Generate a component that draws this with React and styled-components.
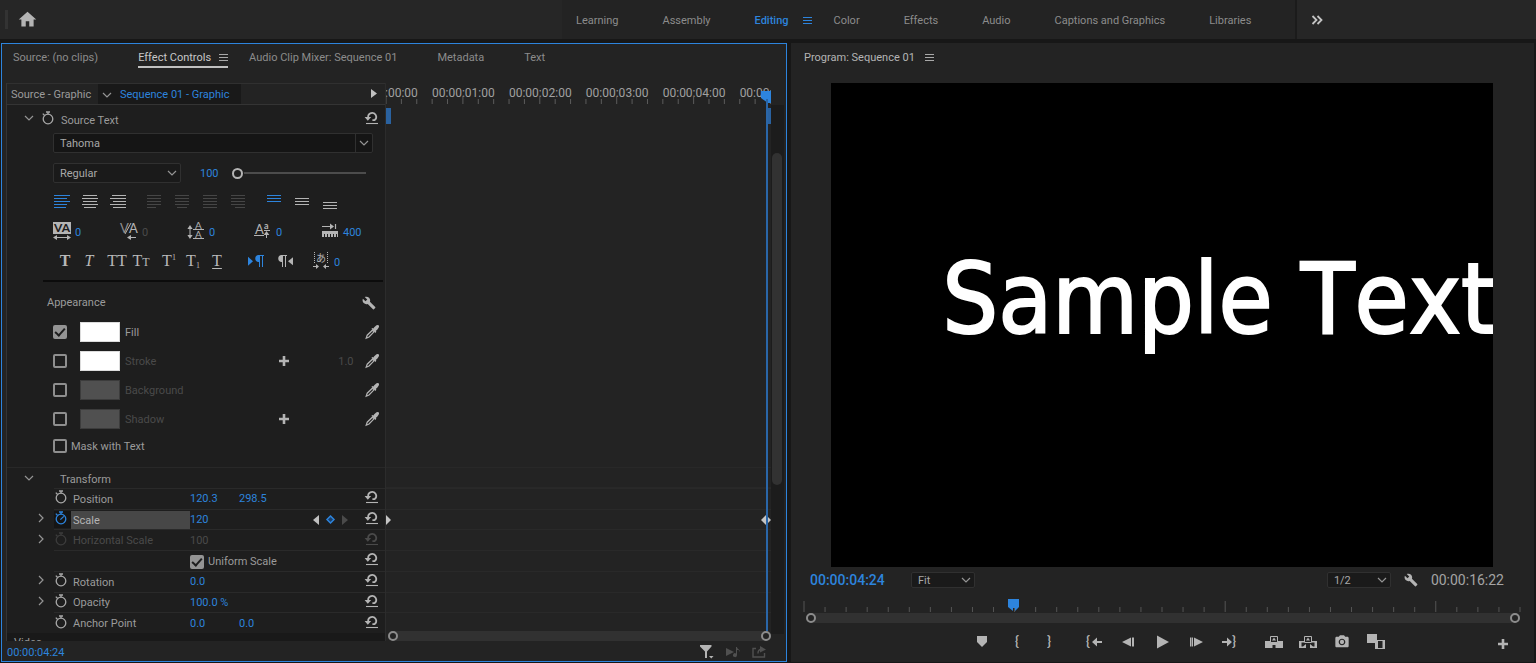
import React, { useState } from 'react';
import styled, { createGlobalStyle } from 'styled-components';
import { MdBuild, MdHome, MdPhotoCamera } from 'react-icons/md';

const BLUE = '#2d84dd';
const TEXT = '#9b9b9b';
const ICON = '#b4b4b4';
const DIM = '#4a4a4a';

/* ---------- icons ---------- */

const ChevronIcon = ({ right }) => (
  <svg width="10" height="10" viewBox="0 0 10 10" fill="none" stroke="#949494" strokeWidth="1.2">
    <path d={right ? 'M3 1l4 4-4 4' : 'M1 3l4 4 4-4'} />
  </svg>
)

const MenuIcon = ({ color = '#a8a8a8' }) => (
  <svg width="9" height="9" viewBox="0 0 9 9" stroke={color}>
    <path d="M0 1.5h9M0 4.5h9M0 7.5h9" />
  </svg>
)

const StopwatchIcon = ({ color = '#a8a8a8', active }) => (
  <svg width="14" height="14" viewBox="0 0 14 14" fill="none" stroke={color} strokeWidth="1.3">
    <circle cx="7" cy="8" r="4.8" />
    <path d="M5 1h4M7 1v2.4M1.8 2.6l1.6 1.6" />
    {active && <path d="M6.4 8.6L9.8 5.4" />}
  </svg>
)

const ResetIcon = ({ color = ICON }) => (
  <svg width="16" height="14" viewBox="0 0 16 14" fill="none" stroke={color}>
    <path d="M5.2 6.4A4 4 0 1 1 11.4 9.2H9.4" strokeWidth="1.8" />
    <path d="M1.6 6h6.6L4.8 9.8z" fill={color} stroke="none" />
    <path d="M3 12.5h12" strokeWidth="1.1" />
  </svg>
)

const DropperIcon = () => (
  <svg width="16" height="16" viewBox="0 0 16 16">
    <path d="M8.4 6.2l1.6 1.6-5 5.2-2.8 1.2 1-3z" fill="none" stroke={ICON} strokeWidth="1.2" />
    <path d="M7.4 4.8l1.1-.8.8.4c1.4-1.9 3.6-4.2 5.2-3.2 1.6 1.2-.4 3.8-2.6 5.6l.4.9-.9 1.2z" fill={ICON} />
  </svg>
)

const PlusIcon = () => (
  <svg width="12" height="12" viewBox="0 0 12 12" stroke={ICON} strokeWidth="2.6">
    <path d="M6 1v10M1 6h10" />
  </svg>
)

const lineSets = {
  left: [[0, 16], [0, 13], [0, 16], [0, 13], [0, 12]],
  center: [[1, 14], [0, 16], [1, 14], [0, 16], [2, 12]],
  right: [[2, 14], [0, 16], [3, 13], [0, 16], [3, 13]],
  justLeft: [[1, 14], [1, 14], [1, 14], [1, 14], [1, 9]],
  justCenter: [[1, 14], [1, 14], [1, 14], [1, 14], [3, 10]],
  justAll: [[1, 14], [1, 14], [1, 14], [1, 14], [1, 14]],
  justRight: [[1, 14], [1, 14], [1, 14], [1, 14], [5, 10]],
}

const AlignIcon = ({ type, color }) => (
  <svg width="16" height="14" viewBox="0 0 16 14" fill={color}>
    {lineSets[type].map(([x, w], i) => <rect key={i} x={x} y={i * 3} width={w} height="1" />)}
  </svg>
)

const VAlignIcon = ({ top, color }) => (
  <svg width="14" height="16" viewBox="0 0 14 16" fill={color}>
    {[0, 3, 6].map((y) => <rect key={y} x="0" y={y + top} width="14" height="1" />)}
  </svg>
)

const GlyphText = styled.text`
  font-family: Lato, 'Liberation Sans', sans-serif;
  font-size: ${(p) => p.$size || 12}px;
  font-weight: ${(p) => (p.$bold ? 700 : 400)};
`

const TrackingIcon = () => (
  <svg width="18" height="18" viewBox="0 0 18 18">
    <rect width="18" height="12" fill={ICON} />
    <GlyphText x="9" y="10" textAnchor="middle" fill="#1b1b1b" $bold>VA</GlyphText>
    <path d="M2 15.5h14" stroke={ICON} />
    <path d="M0 15.5l4-2.5v5zM18 15.5l-4-2.5v5z" fill={ICON} />
  </svg>
)

const KerningIcon = () => (
  <svg width="18" height="18" viewBox="0 0 18 18">
    <GlyphText x="0" y="11" fill="#8f8f8f" $size={13}>V</GlyphText>
    <GlyphText x="9" y="11" fill={ICON} $size={13}>A</GlyphText>
    <path d="M11 1L5 12M10 15.5h6" stroke={ICON} />
    <path d="M7 15.5l4-2.5v5z" fill={ICON} />
  </svg>
)

const LeadingIcon = () => (
  <svg width="18" height="18" viewBox="0 0 18 18">
    <GlyphText x="8" y="7" fill={ICON} $size={10}>A</GlyphText>
    <GlyphText x="8" y="16" fill={ICON} $size={10}>A</GlyphText>
    <path d="M6 7.5h11M6 16.5h11M3 5v9" stroke={ICON} />
    <path d="M3 3l2.6 4H.4zM3 17l2.6-4H.4z" fill={ICON} />
  </svg>
)

const BaselineIcon = () => (
  <svg width="18" height="18" viewBox="0 0 18 18">
    <GlyphText x="1" y="12" fill={ICON} $size={13}>A</GlyphText>
    <GlyphText x="10" y="7" fill={ICON} $size={9} $bold>a</GlyphText>
    <path d="M0 13.5h10M10 8.5h6M12.5 10v6" stroke={ICON} />
    <path d="M12.5 9l2.8 4h-5.6z" fill={ICON} />
  </svg>
)

const TabWidthIcon = () => (
  <svg width="18" height="18" viewBox="0 0 18 18">
    <path d="M1 4.5h9M14.5 2v5" stroke={ICON} strokeWidth="1.2" />
    <path d="M13 4.5L9 1.5v6zM1 9h16v6h-1v-3h-1v3h-2v-3h-1v3h-2v-3H9v3H7v-3H6v3H4v-3H3v3H1z" fill={ICON} />
  </svg>
)

const CjkText = styled.text`
  font-family: 'Noto Sans', 'Noto Sans CJK JP', sans-serif;
  font-size: 10px;
`

const TsumeIcon = () => (
  <svg width="18" height="18" viewBox="0 0 18 18">
    <CjkText x="9" y="10" textAnchor="middle" fill={ICON}>あ</CjkText>
    <path d="M2.5 0v11M15.5 0v11" stroke={ICON} strokeDasharray="1 1" />
    <path d="M1 14.5h4M13 14.5h4" stroke={ICON} />
    <path d="M7 14.5l-3-2.5v5zM11 14.5l3-2.5v5z" fill={ICON} />
  </svg>
)

const PilcrowIcon = ({ rtl }) => (
  <svg width="18" height="14" viewBox="0 0 18 14">
    {rtl
      ? <path d="M8 1H6a3.600 3.600 0 0 0 0 7h1v5h1V2h2v11h1V2h1V1zM18 3.200v8L13 7.200z" fill={ICON} />
      : <path d="M13 1h-2a3.600 3.600 0 0 0 0 7h1v5h1V2h2v11h1V2h1V1zM1 2.800v9l5-4.500z" fill={BLUE} />}
  </svg>
)

const FunnelIcon = () => (
  <svg width="14" height="14" viewBox="0 0 14 14" fill={ICON}>
    <path d="M0 0h11.5v1.5L7 6.5V13H5V6.5L0 1.5zM9 11h4.5L11.3 13.5z" />
  </svg>
)

const AudioLoopIcon = () => (
  <svg width="14" height="12" viewBox="0 0 14 12" fill="#505050">
    <path d="M0 2l8 4-8 4zM10 1h1c0 2 3 2 3 5l-1.400-2H11v5a2 2 0 1 1-1-1.600z" />
  </svg>
)

const ExportIcon = () => (
  <svg width="14" height="12" viewBox="0 0 14 12" fill="none" stroke="#505050" strokeWidth="1.4">
    <path d="M4 2.5H1v8.5h11.5V7" />
    <path d="M6 7.5C6 4.5 7 3.5 9 3.5" />
    <path d="M8 0l6 3.5L8 6.5z" fill="#505050" stroke="none" />
  </svg>
)

const arrowLeft = 'M0 5l5-4.5V4h5v2H5v3.5z'
const arrowRight = 'M10 5L5 .5V4H0v2h5v3.5z'

const transportIcons = {
  marker: <path d="M5 4h10v6l-5 5-5-5z" />,
  markIn: <GlyphText x="11" y="14" textAnchor="middle" $size={13} $bold>{'{'}</GlyphText>,
  markOut: <GlyphText x="9" y="14" textAnchor="middle" $size={13} $bold>{'}'}</GlyphText>,
  goIn: (
    <>
      <GlyphText x="2" y="14" $size={13} $bold>{'{'}</GlyphText>
      <path d={arrowLeft} transform="translate(8 5)" />
    </>
  ),
  back: <path d="M4 10l9-4.5v9zM14 5.5h2v9h-2z" />,
  play: <path d="M5 3.5l12 6.5-12 6.5z" />,
  forward: <path d="M17 10L8 5.5v9zM4 5.5h1.5v9H4zM6 5.5h1v9H6z" />,
  goOut: (
    <>
      <path d={arrowRight} transform="translate(2 5)" />
      <GlyphText x="12" y="14" $size={13} $bold>{'}'}</GlyphText>
    </>
  ),
  lift: (
    <>
      <path d="M1 9h18v7h-7.5v-3h-3v3H1z" />
      <path d="M6.5 4.5h7v6h-7z" fill="#232323" stroke={ICON} />
      <path d="M10 5.5l2 3H8z" />
    </>
  ),
  extract: (
    <>
      <path d="M1 9h5v1.5H3.500v4H5L8 12v4H1zM19 9h-5v1.5h2.500v4H15L12 12v4h7z" />
      <path d="M6.5 4.5h7v6h-7z" fill="#232323" stroke={ICON} />
      <path d="M10 5.5l2 3H8z" />
    </>
  ),
  compare: (
    <>
      <path d="M1 2h10v9H1z" />
      <path d="M9.5 8.5h9v8h-9z" fill="#232323" stroke={ICON} />
      <path d="M9 8h3v9H9zM16.5 8H19v9h-2.5z" />
    </>
  ),
}

const TransportIcon = ({ name }) => (
  <svg width="20" height="20" viewBox="0 0 20 20" fill={ICON}>{transportIcons[name]}</svg>
)

/* ---------- shared parts ---------- */

const GlobalStyle = createGlobalStyle`
  * {
    box-sizing: border-box;
  }
  body {
    margin: 0;
    background: #171717;
    color: ${TEXT};
    font-family: Roboto, 'Liberation Sans', sans-serif;
    font-size: 11px;
    line-height: 14px;
  }
  button, select, input {
    font: inherit;
    color: inherit;
    margin: 0;
  }
  svg {
    display: block;
    flex: none;
    overflow: visible;
  }
`

const Window = styled.div`
  display: flex;
  flex-direction: column;
  min-height: 100vh;
`

const IconButton = styled.button`
  display: flex;
  align-items: center;
  justify-content: center;
  width: ${(p) => p.$width || 16}px;
  height: ${(p) => p.$height || 16}px;
  flex: none;
  padding: 0;
  border: 0;
  background: none;
  color: ${ICON};
`

const ResetButton = styled(IconButton)`
  margin-bottom: 3px;
`

const Hot = styled.span`
  padding-top: 1px;
  color: ${(p) => (p.$dim ? DIM : BLUE)};
  width: ${(p) => (p.$width ? `${p.$width}px` : 'auto')};
  white-space: nowrap;
`

const Check = styled.input.attrs({ type: 'checkbox' })`
  appearance: none;
  display: grid;
  place-content: center;
  width: 14px;
  height: 14px;
  flex: none;
  border: 2px solid #8e8e8e;
  border-radius: 2px;
  &:checked {
    background: #949494;
    border-color: #949494;
  }
  &:checked::before {
    content: '';
    width: 4px;
    height: 8px;
    margin-bottom: 2px;
    border: solid #1e1e1e;
    border-width: 0 2px 2px 0;
    transform: rotate(42deg);
  }
`

const SelectBox = styled.div`
  position: relative;
  display: flex;
  height: ${(p) => p.$height}px;
  width: ${(p) => (p.$width ? `${p.$width}px` : 'auto')};
  border: 1px solid #303030;
  border-radius: 2px;
  background: ${(p) => p.$bg || '#1a1a1a'};
  color: #a8a8a8;
  select {
    flex: 1;
    appearance: none;
    border: 0;
    padding: 1px 6px 0;
    background: none;
  }
  option {
    background: #1a1a1a;
  }
`

const SelectArrow = styled.span`
  position: absolute;
  right: 0;
  top: 0;
  bottom: 0;
  display: flex;
  align-items: center;
  padding: 0 3px;
  border-left: 1px solid ${(p) => (p.$split ? '#303030' : 'transparent')};
  pointer-events: none;
`

function Dropdown({ label, value, split, ...box }) {
  return (
    <SelectBox {...box}>
      <select aria-label={label} defaultValue={value}>
        <option>{value}</option>
      </select>
      <SelectArrow $split={split}><ChevronIcon /></SelectArrow>
    </SelectBox>
  )
}

const Ring = styled.span`
  width: 10px;
  height: 10px;
  border: 2px solid #8c8c8c;
  border-radius: 50%;
  background: #232323;
`

const ZoomBar = styled.div`
  display: flex;
  justify-content: space-between;
  height: 10px;
  margin: ${(p) => p.$margin || 0};
  border-radius: 5px;
  background: #313131;
`

/* ---------- top bar ---------- */

const TopBar = styled.header`
  display: grid;
  grid-template-columns: 562fr 735fr 239fr;
  height: 39px;
  margin-bottom: 4px;
  background: #262626;
`

const HomeArea = styled.div`
  display: flex;
  align-items: center;
  padding-left: 5px;
  gap: 8px;
`

const Grip = styled.span`
  width: 3px;
  height: 19px;
  background: #333;
`

const Workspaces = styled.nav`
  display: flex;
  align-items: center;
  gap: 44px;
  padding: 2px 0 0 14px;
  background: #232323;
  border-right: 2px solid #1b1b1b;
`

const WorkspaceTab = styled.button`
  display: flex;
  align-items: center;
  gap: 14px;
  padding: 0;
  border: 0;
  background: none;
  white-space: nowrap;
  color: ${(p) => (p.$active ? BLUE : '#8c8c8c')};
  font-weight: ${(p) => (p.$active ? 500 : 400)};
  margin-right: ${(p) => (p.$active ? '-22px' : 0)};
`

const More = styled.div`
  display: flex;
  align-items: center;
  padding-left: 12px;
`

const workspaces = ['Learning', 'Assembly', 'Editing', 'Color', 'Effects', 'Audio', 'Captions and Graphics', 'Libraries']

function WorkspaceBar() {
  const [active, setActive] = useState('Editing')
  return (
    <TopBar>
      <HomeArea>
        <Grip />
        <IconButton $width={22} $height={22} aria-label="Home"><MdHome size={21} /></IconButton>
      </HomeArea>
      <Workspaces>
        {workspaces.map((w) => (
          <WorkspaceTab key={w} $active={w === active} onClick={() => setActive(w)}>
            {w}
            {w === active && <MenuIcon color={BLUE} />}
          </WorkspaceTab>
        ))}
      </Workspaces>
      <More>
        <IconButton aria-label="More workspaces">
          <svg width="12" height="10" viewBox="0 0 12 10" fill="none" stroke="#c4c4c4" strokeWidth="1.8">
            <path d="M1.5 1l4 4-4 4M6.5 1l4 4-4 4" />
          </svg>
        </IconButton>
      </More>
    </TopBar>
  )
}

/* ---------- effect controls ---------- */

const Main = styled.main`
  flex: 1;
  display: grid;
  grid-template-columns: 786fr 743fr;
  gap: 4px;
  padding: 0 2px 1px 1px;
`

const Panel = styled.section`
  display: flex;
  flex-direction: column;
  min-width: 0;
  background: #232323;
  border: 1px solid ${(p) => (p.$focus ? BLUE : '#232323')};
`

const PanelTabs = styled.div`
  display: flex;
  align-items: flex-start;
  gap: 40px;
  height: 39px;
  padding: 3px 0 0 11px;
`

const PanelTab = styled.button`
  display: flex;
  align-items: center;
  gap: 8px;
  height: 21px;
  padding: 2px 0 0;
  border: 0;
  border-bottom: 2px solid ${(p) => (p.$active ? '#c0c0c0' : 'transparent')};
  margin-right: ${(p) => (p.$active ? '-19px' : 0)};
  background: none;
  white-space: nowrap;
  color: ${(p) => (p.$active ? '#c8c8c8' : '#8c8c8c')};
`

const EffectBody = styled.div`
  flex: 1;
  display: grid;
  grid-template-columns: 380fr 384fr 15px;
  margin-left: 4px;
`

const EffectList = styled.div`
  display: flex;
  flex-direction: column;
  min-width: 0;
  border-left: 1px solid #343434;
  border-right: 1px solid #2c2c2c;
  background: #1e1e1e;
`

const ClipHeader = styled.div`
  display: flex;
  align-items: center;
  height: 22px;
  border-top: 1px solid #303030;
  border-bottom: 1px solid #343434;
  background: #232323;
  padding-left: 4px;
`

const ClipSource = styled.span`
  width: 87px;
  padding-top: 2px;
  white-space: nowrap;
`

const ClipSequence = styled.button`
  display: flex;
  align-items: center;
  gap: 8px;
  height: 20px;
  padding: 2px 12px 0 4px;
  border: 0;
  background: #191919;
  color: ${BLUE};
  white-space: nowrap;
`

const PushRight = styled.span`
  margin-left: auto;
  padding-right: ${(p) => p.$pad || 0}px;
`

const GroupRow = styled.div`
  display: flex;
  align-items: center;
  gap: ${(p) => p.$gap || 7}px;
  height: ${(p) => p.$height}px;
  padding: 0 6px 0 17px;
  flex: none;
`

const StopwatchSlot = styled.span`
  width: 16px;
  margin-left: 3px;
`

const GroupLabel = styled.span`
  padding-top: ${(p) => p.$drop || 0}px;
  margin-left: ${(p) => p.$indent || 0}px;
`

const TextSection = styled.div`
  display: flex;
  flex-direction: column;
  height: 363px;
  border-bottom: 1px solid #282828;
`

const FontControls = styled.div`
  display: flex;
  flex-direction: column;
  gap: 10px;
  padding: 3px 12px 9px 46px;
`

const StyleRow = styled.div`
  display: flex;
  align-items: center;
  height: 20px;
`

const Slider = styled.input.attrs({ type: 'range' })`
  appearance: none;
  flex: 1;
  min-width: 0;
  height: 12px;
  margin: 0 7px 0 13px;
  background: linear-gradient(#4c4c4c, #4c4c4c) center / 100% 2px no-repeat;
  &::-webkit-slider-thumb {
    appearance: none;
    width: 11px;
    height: 11px;
    border: 2px solid #b4b4b4;
    border-radius: 50%;
    background: #1e1e1e;
    box-shadow: 0 0 0 1px #1e1e1e;
  }
`

const OpacityValue = styled(Hot)`
  margin-left: 19px;
`

const AlignRow = styled.div`
  display: flex;
  gap: 8px;
  height: 20px;
  margin: -1px 0 -1px -5px;
`

const ButtonGroup = styled.div`
  display: flex;
  align-items: center;
`

const MetricRow = styled.div`
  display: grid;
  grid-template-columns: repeat(5, 67px);
  height: 20px;
`

const Metric = styled.div`
  display: flex;
  align-items: center;
  gap: 4px;
  ${Hot} {
    padding-top: 3px;
  }
`

const TypeRow = styled.div`
  display: flex;
  gap: 4px;
  height: 20px;
`

const TypeButton = styled.button`
  width: 24px;
  padding: 0;
  border: 0;
  background: none;
  color: #b8b8b8;
  font: ${(p) => p.$font || '400 16px'}/20px 'Liberation Serif', serif;
  text-decoration: ${(p) => (p.$underline ? 'underline' : 'none')};
  text-underline-offset: 2px;
  small {
    font-size: ${(p) => p.$small || 8}px;
    vertical-align: ${(p) => p.$shift || 'baseline'};
    line-height: 8px;
  }
`

const Paragraphs = styled(ButtonGroup)`
  margin-left: 9px;
`

const TsumeMetric = styled(Metric)`
  margin-left: 10px;
`

const Divider = styled.hr`
  width: auto;
  height: 2px;
  margin: 0 2px 0 36px;
  border: 0;
  background: #0c0c0c;
`

const Appearance = styled.div`
  display: flex;
  flex-direction: column;
  padding: 11px 5px 0 46px;
`

const AppearanceTitle = styled.div`
  display: flex;
  align-items: center;
  justify-content: space-between;
  height: 20px;
  margin: 0 3px 4px -6px;
`

const AppearanceRow = styled.div`
  display: flex;
  align-items: center;
  height: 29px;
`

const MaskRow = styled(AppearanceRow)`
  height: 26px;
`

const Swatch = styled.button`
  width: 40px;
  height: 20px;
  margin-left: 13px;
  padding: 0;
  border: 1px solid ${(p) => (p.$empty ? '#3c3c3c' : '#dcdcdc')};
  background: ${(p) => (p.$empty ? '#505050' : '#fff')};
`

const AppearanceLabel = styled.label`
  flex: 1;
  margin-left: ${(p) => p.$gap || 5}px;
  padding-top: 2px;
  color: ${(p) => (p.$dim ? DIM : TEXT)};
`

const StrokeWidth = styled.span`
  width: 62px;
  margin-right: 11px;
  padding-top: 3px;
  text-align: right;
  color: ${DIM};
`

const PropertyGrid = styled.div`
  flex: 1;
  display: grid;
  grid-template-rows: repeat(7, 1fr);
`

const PropertyRow = styled.div`
  display: flex;
  align-items: center;
  padding-left: 29px;
`

const Twirl = styled.span`
  width: 18px;
  padding-bottom: 2px;
`

const PropertyBody = styled.div`
  flex: 1;
  display: flex;
  align-items: center;
  height: 100%;
  padding-right: 6px;
  border-top: 1px solid #2a2a2a;
`

const Watch = styled.span`
  width: 17px;
  height: 17px;
  background: ${(p) => (p.$active ? '#151515' : 'none')};
`

const PropertyName = styled.span`
  width: 119px;
  padding: 3px 0 1px 2px;
  white-space: nowrap;
  color: ${(p) => (p.$dim ? DIM : p.$selected ? '#b4b4b4' : TEXT)};
  background: ${(p) => (p.$selected ? '#474747' : 'none')};
`

const UniformLabel = styled.label`
  display: flex;
  align-items: center;
  gap: 4px;
  padding-top: 2px;
`

const KeyNav = styled.span`
  display: flex;
  margin-right: 10px;
`

const NextEffect = styled.div`
  height: 8px;
  padding: 3px 0 0 7px;
  overflow: hidden;
  background: #191919;
`

const Lanes = styled.div`
  position: relative;
  display: flex;
  flex-direction: column;
  min-width: 0;
  overflow: hidden;
`

const Ruler = styled.div`
  position: relative;
  height: 22px;
  flex: none;
`

const RulerLabels = styled.div`
  display: grid;
  grid-template-columns: repeat(6, 1fr);
  margin: 0 -10%;
  font-size: 12px;
  line-height: 20px;
  text-align: center;
  color: #a0a0a0;
`

const Ticks = styled.svg`
  position: absolute;
  left: 0;
  bottom: 0;
  width: 100%;
  height: 100%;
`

const LaneSpace = styled.div`
  height: ${(p) => p.$height}px;
  flex: none;
  display: flex;
  justify-content: space-between;
  padding: 3px 0;
  border-bottom: 1px solid #282828;
`

const ClipEdge = styled.span`
  width: 5px;
  height: 16px;
  background: #2a62a0;
`

const Lane = styled.div`
  display: flex;
  align-items: center;
  justify-content: space-between;
  border-top: 1px solid #292929;
`

const TimelinePlayhead = styled.svg`
  position: absolute;
  right: 0;
  top: 8px;
  width: 10px;
  height: calc(100% - 18px);
  overflow: hidden;
`

const ScrollTrack = styled.div`
  margin: 22px 2px 7px 0;
  padding: 48px 2px 0 1px;
  background: #1c1c1c;
`

const ScrollThumb = styled.div`
  height: 69%;
  border-radius: 5px;
  background: #323232;
`

const EffectFooter = styled.footer`
  display: flex;
  align-items: center;
  gap: 10px;
  height: 20px;
  padding: 2px 19px 0 5px;
  ${Hot} {
    flex: 1;
    padding-top: 2px;
  }
`

const horizontal = ['left', 'center', 'right']
const justified = ['justLeft', 'justCenter', 'justAll', 'justRight']

const fills = [
  { name: 'Fill', checked: true },
  { name: 'Stroke', dim: true, add: true, width: '1.0' },
  { name: 'Background', dim: true, empty: true },
  { name: 'Shadow', dim: true, empty: true, add: true },
]

const properties = [
  { name: 'Position', values: ['120.3', '298.5'] },
  { name: 'Scale', values: ['120'], twirl: true, keyed: true },
  { name: 'Horizontal Scale', values: ['100'], twirl: true, dim: true },
  { uniform: true, name: 'uniform' },
  { name: 'Rotation', values: ['0.0'], twirl: true },
  { name: 'Opacity', values: ['100.0 %'], twirl: true },
  { name: 'Anchor Point', values: ['0.0', '0.0'] },
]

function SourceText() {
  return (
    <FontControls>
      <Dropdown label="Font" value="Tahoma" split $height={20} $bg="#151515" />
      <StyleRow>
        <Dropdown label="Font style" value="Regular" $height={20} $width={128} />
        <OpacityValue>100</OpacityValue>
        <Slider aria-label="Font size" min="0" max="400" defaultValue="0" />
      </StyleRow>
      <AlignRow>
        <ButtonGroup>
          {horizontal.map((t, i) => (
            <IconButton key={t} $width={28} aria-label={`Align ${t}`}>
              <AlignIcon type={t} color={i === 0 ? BLUE : ICON} />
            </IconButton>
          ))}
        </ButtonGroup>
        <ButtonGroup>
          {justified.map((t) => (
            <IconButton key={t} $width={28} aria-label={t} disabled><AlignIcon type={t} color="#464646" /></IconButton>
          ))}
        </ButtonGroup>
        <ButtonGroup>
          <IconButton $width={28} aria-label="Top"><VAlignIcon top={1} color={BLUE} /></IconButton>
          <IconButton $width={28} aria-label="Middle"><VAlignIcon top={4} color={ICON} /></IconButton>
          <IconButton $width={28} aria-label="Bottom"><VAlignIcon top={8} color={ICON} /></IconButton>
        </ButtonGroup>
      </AlignRow>
      <MetricRow>
        <Metric><TrackingIcon /><Hot>0</Hot></Metric>
        <Metric><KerningIcon /><Hot $dim>0</Hot></Metric>
        <Metric><LeadingIcon /><Hot>0</Hot></Metric>
        <Metric><BaselineIcon /><Hot>0</Hot></Metric>
        <Metric><TabWidthIcon /><Hot>400</Hot></Metric>
      </MetricRow>
      <TypeRow>
        <ButtonGroup>
          <TypeButton $font="700 16px">T</TypeButton>
          <TypeButton $font="italic 400 16px">T</TypeButton>
        </ButtonGroup>
        <ButtonGroup>
          <TypeButton>TT</TypeButton>
          <TypeButton $small={12}>T<small>T</small></TypeButton>
        </ButtonGroup>
        <ButtonGroup>
          <TypeButton $shift="6px">T<small>1</small></TypeButton>
          <TypeButton $shift="-2px">T<small>1</small></TypeButton>
          <TypeButton $underline>T</TypeButton>
        </ButtonGroup>
        <Paragraphs>
          <IconButton $width={28} aria-label="Left to right"><PilcrowIcon /></IconButton>
          <IconButton $width={28} aria-label="Right to left"><PilcrowIcon rtl /></IconButton>
        </Paragraphs>
        <TsumeMetric><TsumeIcon /><Hot>0</Hot></TsumeMetric>
      </TypeRow>
    </FontControls>
  )
}

function Property({ name, values, twirl, keyed, dim, uniform }) {
  const resetColor = dim ? DIM : ICON
  return (
    <PropertyRow>
      <Twirl>{twirl && <ChevronIcon right />}</Twirl>
      <PropertyBody>
        <Watch $active={keyed}>
          {!uniform && <StopwatchIcon color={dim ? '#3c3c3c' : keyed ? BLUE : undefined} active={keyed} />}
        </Watch>
        <PropertyName $dim={dim} $selected={keyed}>{!uniform && name}</PropertyName>
        {uniform
          ? <UniformLabel><Check defaultChecked />Uniform Scale</UniformLabel>
          : values.map((v, i) => <Hot key={i} $dim={dim} $width={49}>{v}</Hot>)}
        <PushRight />
        {keyed && (
          <KeyNav>
            <IconButton $width={15} aria-label="Previous keyframe">
              <svg width="7" height="10" fill="#c0c0c0"><path d="M7 0v10L1 5z" /></svg>
            </IconButton>
            <IconButton $width={15} aria-label="Toggle keyframe">
              <svg width="9" height="9" fill="#1c3f68" stroke={BLUE} strokeWidth="1.5"><path d="M4.5 1L8 4.5 4.5 8 1 4.5z" /></svg>
            </IconButton>
            <IconButton $width={15} aria-label="Next keyframe">
              <svg width="7" height="10" fill="#4a4a4a"><path d="M0 0v10l6-5z" /></svg>
            </IconButton>
          </KeyNav>
        )}
        <ResetButton aria-label="Reset"><ResetIcon color={resetColor} /></ResetButton>
      </PropertyBody>
    </PropertyRow>
  )
}

function EffectTimeline() {
  const ticks = Array.from({ length: 26 }, (_, i) => i)
  return (
    <Lanes>
      <Ruler>
        <RulerLabels>
          {[0, 1, 2, 3, 4, 5].map((s) => <span key={s}>00:00:0{s}:00</span>)}
        </RulerLabels>
        <Ticks stroke="#5c5c5c">
          {ticks.map((i) => (
            <line key={i} x1={`${i * 4}%`} x2={`${i * 4}%`} y1={i % 5 === 0 ? 13 : 16} y2="21" />
          ))}
        </Ticks>
      </Ruler>
      <LaneSpace $height={363}><ClipEdge /><ClipEdge /></LaneSpace>
      <LaneSpace $height={20} />
      <PropertyGrid>
        {properties.map((p) => (
          <Lane key={p.name}>
            {p.keyed && (
              <>
                <svg width="5" height="10" fill="#c4c4c4"><path d="M0 0v10l5-5z" /></svg>
                <svg width="10" height="10" fill="#c4c4c4"><path d="M5 0L0 5l5 5 5-5z" /></svg>
              </>
            )}
          </Lane>
        ))}
      </PropertyGrid>
      <TimelinePlayhead>
        <path d="M0 0h10v12H7L0 7z" fill={BLUE} />
        <rect x="5" y="8" width="2" height="100%" fill="#2a66a8" />
      </TimelinePlayhead>
      <ZoomBar $margin="-2px 0 0 2px"><Ring /><Ring /></ZoomBar>
    </Lanes>
  )
}

function EffectControls() {
  return (
    <Panel $focus>
      <PanelTabs>
        <PanelTab>Source: (no clips)</PanelTab>
        <PanelTab $active>Effect Controls <MenuIcon /></PanelTab>
        <PanelTab>Audio Clip Mixer: Sequence 01</PanelTab>
        <PanelTab>Metadata</PanelTab>
        <PanelTab>Text</PanelTab>
      </PanelTabs>
      <EffectBody>
        <EffectList>
          <ClipHeader>
            <ClipSource>Source - Graphic</ClipSource>
            <ClipSequence><ChevronIcon />Sequence 01 - Graphic</ClipSequence>
            <PushRight $pad={8}>
              <svg width="6" height="10" fill="#c0c0c0"><path d="M0 0v9l6-4.5z" /></svg>
            </PushRight>
          </ClipHeader>
          <TextSection>
            <GroupRow $height={25} $gap={4}>
              <ChevronIcon />
              <StopwatchSlot><StopwatchIcon /></StopwatchSlot>
              <GroupLabel $drop={6}>Source Text</GroupLabel>
              <PushRight><IconButton aria-label="Reset text"><ResetIcon /></IconButton></PushRight>
            </GroupRow>
            <SourceText />
            <Divider />
            <Appearance>
              <AppearanceTitle>
                Appearance
                <IconButton aria-label="Appearance settings"><MdBuild size={14} /></IconButton>
              </AppearanceTitle>
              {fills.map((f) => (
                <AppearanceRow key={f.name}>
                  <Check id={f.name} defaultChecked={f.checked} />
                  <Swatch $empty={f.empty} aria-label={`${f.name} color`} />
                  <AppearanceLabel htmlFor={f.name} $dim={f.dim}>{f.name}</AppearanceLabel>
                  {f.add && <IconButton $width={14} aria-label={`Add ${f.name}`}><PlusIcon /></IconButton>}
                  <StrokeWidth>{f.width}</StrokeWidth>
                  <IconButton aria-label={`Pick ${f.name}`}><DropperIcon /></IconButton>
                </AppearanceRow>
              ))}
              <MaskRow>
                <Check id="mask" />
                <AppearanceLabel htmlFor="mask" $gap={4}>Mask with Text</AppearanceLabel>
              </MaskRow>
            </Appearance>
          </TextSection>
          <GroupRow $height={20}>
            <ChevronIcon />
            <GroupLabel $indent={19} $drop={4}>Transform</GroupLabel>
          </GroupRow>
          <PropertyGrid>
            {properties.map((p) => <Property key={p.name} {...p} />)}
          </PropertyGrid>
          <NextEffect>Video</NextEffect>
        </EffectList>
        <EffectTimeline />
        <ScrollTrack><ScrollThumb /></ScrollTrack>
      </EffectBody>
      <EffectFooter>
        <Hot>00:00:04:24</Hot>
        <IconButton aria-label="Filter"><FunnelIcon /></IconButton>
        <IconButton aria-label="Play audio" disabled><AudioLoopIcon /></IconButton>
        <IconButton aria-label="Export" disabled><ExportIcon /></IconButton>
      </EffectFooter>
    </Panel>
  )
}

/* ---------- program monitor ---------- */

const ProgramTitle = styled.h2`
  display: flex;
  align-items: center;
  gap: 10px;
  height: 27px;
  margin: 0 0 12px;
  padding-left: 12px;
  font-size: 11px;
  font-weight: 400;
  color: #b4b4b4;
`

const Screen = styled.div`
  flex: 1;
  margin: 0 40px 0 39px;
  padding: 166px 0 0 15%;
  overflow: hidden;
  background: #000;
  color: #fff;
  font: 98px/100px 'DejaVu Sans Condensed', 'DejaVu Sans', sans-serif;
  font-kerning: none;
  -webkit-text-stroke: 2px #fff;
  white-space: nowrap;
`

const MonitorInfo = styled.div`
  display: flex;
  align-items: center;
  height: 25px;
  padding: 0 29px 0 18px;
`

const Timecode = styled.span`
  width: ${(p) => p.$width || 'auto'};
  font-size: 14px;
  font-weight: ${(p) => (p.$current ? 500 : 400)};
  color: ${(p) => (p.$current ? BLUE : '#a4a4a4')};
`

const InfoRight = styled.div`
  display: flex;
  align-items: center;
  gap: 12px;
  margin-left: auto;
`

const MonitorRuler = styled.div`
  position: relative;
  height: 21px;
  margin: 0 13px 0 12px;
`

const MonitorPlayhead = styled.svg`
  position: absolute;
  left: 28%;
  top: 7px;
  margin-left: 4px;
`

const Transport = styled.div`
  display: grid;
  grid-template-columns: 176fr auto 142fr;
  align-items: center;
  height: 38px;
`

const TransportGroups = styled.div`
  grid-column: 2;
  display: flex;
  gap: 10px;
`

const AddButton = styled(IconButton)`
  justify-self: end;
  margin: 4px 22px 0 0;
`

function ProgramMonitor() {
  const ticks = Array.from({ length: 35 }, (_, i) => i)
  const groups = [
    ['marker', 'markIn', 'markOut'],
    ['goIn', 'back', 'play', 'forward', 'goOut'],
    ['lift', 'extract', 'camera', 'compare'],
  ]
  return (
    <Panel>
      <ProgramTitle>Program: Sequence 01 <MenuIcon /></ProgramTitle>
      <Screen>Sample Text</Screen>
      <MonitorInfo>
        <Timecode $current $width="101px">00:00:04:24</Timecode>
        <Dropdown label="Zoom level" value="Fit" $height={16} $width={64} />
        <InfoRight>
          <Dropdown label="Playback resolution" value="1/2" $height={16} $width={64} />
          <IconButton aria-label="Settings"><MdBuild size={14} /></IconButton>
          <Timecode>00:00:16:22</Timecode>
        </InfoRight>
      </MonitorInfo>
      <MonitorRuler>
        <Ticks stroke="#555">
          {ticks.map((i) => (
            <line key={i} x1={`${(i * 100) / 34}%`} x2={`${(i * 100) / 34}%`} y1={i % 10 === 0 ? 9 : 15} y2="20" />
          ))}
        </Ticks>
        <MonitorPlayhead width="12" height="13"><path d="M0 0h11v8l-4 4V9H5v3L0 8z" fill={BLUE} /></MonitorPlayhead>
      </MonitorRuler>
      <ZoomBar $margin="0 13px 0 14px"><Ring /><Ring /></ZoomBar>
      <Transport>
        <TransportGroups>
          {groups.map((g) => (
            <ButtonGroup key={g[0]}>
              {g.map((name) => (
                <IconButton key={name} $width={34} $height={24} aria-label={name}>
                  {name === 'camera' ? <MdPhotoCamera size={16} /> : <TransportIcon name={name} />}
                </IconButton>
              ))}
            </ButtonGroup>
          ))}
        </TransportGroups>
        <AddButton aria-label="Button editor"><PlusIcon /></AddButton>
      </Transport>
    </Panel>
  )
}

function App() {
  return (
    <Window>
      <GlobalStyle />
      <WorkspaceBar />
      <Main>
        <EffectControls />
        <ProgramMonitor />
      </Main>
    </Window>
  )
}

export default App;
